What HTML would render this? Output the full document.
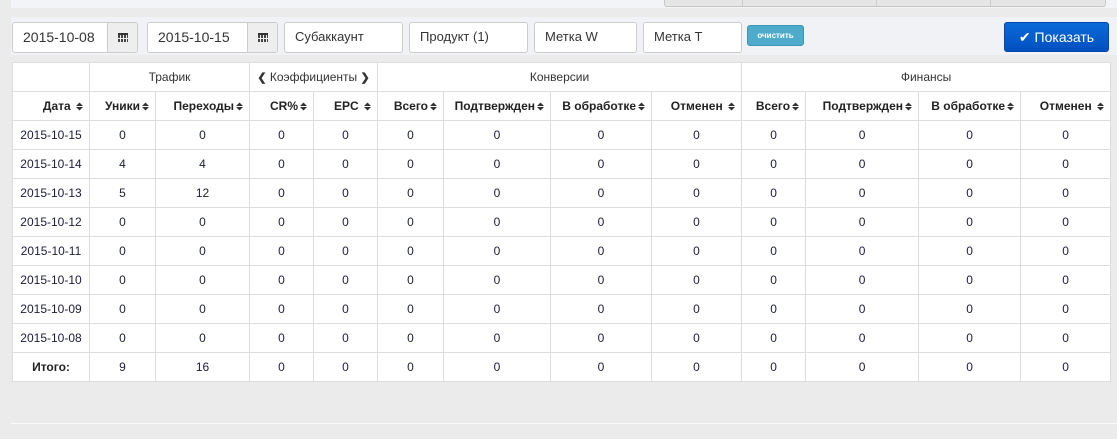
<!DOCTYPE html><html><head><meta charset="utf-8"><style>
body{margin:0;width:1117px;height:439px;background:#ebebeb;font-family:"Liberation Sans",Arial,sans-serif;position:relative;overflow:hidden;font-size:12px;color:#222}
.a{position:absolute;box-sizing:border-box}
.inp{background:#fff;border:1px solid #ccc;border-radius:3px;font-size:14px;color:#333;padding:6px 0 0 10px;height:31px}
.add{background:#eee;border-left:1px solid #ccc;position:absolute;top:0;right:0;width:29px;height:29px;border-radius:0 3px 3px 0}
.add i{position:absolute;left:10px;top:10px;width:10px;height:9px;background:repeating-linear-gradient(90deg,#444 0 2px,#eee 2px 3px),#444;border-top:2px solid #333;box-sizing:border-box}
.add i:after{content:"";position:absolute;left:0;right:0;top:3px;height:1px;background:#eee}
table{border-collapse:collapse;position:absolute;left:12px;top:62px;width:1098px;background:#fff;table-layout:fixed;border-radius:4px}
td,th{border:1px solid #ddd;height:28px;padding:0 6px;text-align:center;font-size:12px;color:#1c1c3a;white-space:nowrap;overflow:hidden}
th{font-weight:bold;color:#222;text-align:right}
tr.g th{font-weight:normal;text-align:center;color:#333}
.s{display:inline-block;width:7px;height:9px;margin-left:2px;vertical-align:-1px}
</style></head><body>
<svg width="0" height="0" style="position:absolute"><defs><symbol id="s" viewBox="0 0 7 9"><path d="M0 4L3.5 0.5L7 4ZM0 5L3.5 8.5L7 5Z" fill="#333"/></symbol></defs></svg>
<div class="a" style="left:11px;top:0;width:1106px;height:8px;background:#f3f4f7"></div>
<div class="a" style="left:664px;top:0;width:442px;height:7px;background:#e6e6e6;border:1px solid #c8c8c8;border-top:none;border-radius:0 0 3px 3px"></div>
<div class="a" style="left:742px;top:0;width:1px;height:6px;background:#ccc"></div>
<div class="a" style="left:876px;top:0;width:1px;height:6px;background:#ccc"></div>
<div class="a" style="left:990px;top:0;width:1px;height:6px;background:#ccc"></div>
<div class="a" style="left:11px;top:17px;width:1106px;height:38px;background:#f1f2f5"></div>
<div class="a inp" style="left:12px;top:22px;width:126px">2015-10-08<span class="add"><i></i></span></div>
<div class="a inp" style="left:147px;top:22px;width:131px">2015-10-15<span class="add"><i></i></span></div>
<div class="a inp" style="left:284px;top:22px;width:119px;font-size:13px">Субаккаунт</div>
<div class="a inp" style="left:409px;top:22px;width:119px;font-size:13px">Продукт (1)</div>
<div class="a inp" style="left:534px;top:22px;width:103px;font-size:13px">Метка W</div>
<div class="a inp" style="left:643px;top:22px;width:99px;font-size:13px">Метка T</div>
<div class="a" style="left:747px;top:25px;width:57px;height:21px;background:#4eabcb;border:1px solid #3a97b8;border-radius:3px;color:#fff;font-size:8px;font-weight:bold;text-align:center;line-height:19px">очистить</div>
<div class="a" style="left:1004px;top:22px;width:105px;height:30px;background:linear-gradient(#0a6ad8,#0350c0);border:1px solid #0447a8;border-radius:3px;color:#fff;font-size:14px;line-height:28px;text-align:center">✔ Показать</div>
<table>
<colgroup><col style="width:77px"><col style="width:66px"><col style="width:94px"><col style="width:64px"><col style="width:64px"><col style="width:66px"><col style="width:107px"><col style="width:101px"><col style="width:90px"><col style="width:64px"><col style="width:113px"><col style="width:102px"><col style="width:90px"></colgroup>
<tr class="g"><th></th><th colspan="2">Трафик</th><th colspan="2"><b style="font-size:11px">❮</b> Коэффициенты <b style="font-size:11px">❯</b></th><th colspan="4">Конверсии</th><th colspan="4">Финансы</th></tr>
<tr><th>Дата <svg class="s"><use href="#s"/></svg></th><th>Уники<svg class="s"><use href="#s"/></svg></th><th>Переходы<svg class="s"><use href="#s"/></svg></th><th>CR%<svg class="s"><use href="#s"/></svg></th><th>EPC <svg class="s"><use href="#s"/></svg></th><th>Всего<svg class="s"><use href="#s"/></svg></th><th>Подтвержден<svg class="s"><use href="#s"/></svg></th><th>В обработке<svg class="s"><use href="#s"/></svg></th><th>Отменен <svg class="s"><use href="#s"/></svg></th><th>Всего<svg class="s"><use href="#s"/></svg></th><th>Подтвержден<svg class="s"><use href="#s"/></svg></th><th>В обработке<svg class="s"><use href="#s"/></svg></th><th>Отменен <svg class="s"><use href="#s"/></svg></th></tr>
<tr><td>2015-10-15</td><td>0</td><td>0</td><td>0</td><td>0</td><td>0</td><td>0</td><td>0</td><td>0</td><td>0</td><td>0</td><td>0</td><td>0</td></tr>
<tr><td>2015-10-14</td><td>4</td><td>4</td><td>0</td><td>0</td><td>0</td><td>0</td><td>0</td><td>0</td><td>0</td><td>0</td><td>0</td><td>0</td></tr>
<tr><td>2015-10-13</td><td>5</td><td>12</td><td>0</td><td>0</td><td>0</td><td>0</td><td>0</td><td>0</td><td>0</td><td>0</td><td>0</td><td>0</td></tr>
<tr><td>2015-10-12</td><td>0</td><td>0</td><td>0</td><td>0</td><td>0</td><td>0</td><td>0</td><td>0</td><td>0</td><td>0</td><td>0</td><td>0</td></tr>
<tr><td>2015-10-11</td><td>0</td><td>0</td><td>0</td><td>0</td><td>0</td><td>0</td><td>0</td><td>0</td><td>0</td><td>0</td><td>0</td><td>0</td></tr>
<tr><td>2015-10-10</td><td>0</td><td>0</td><td>0</td><td>0</td><td>0</td><td>0</td><td>0</td><td>0</td><td>0</td><td>0</td><td>0</td><td>0</td></tr>
<tr><td>2015-10-09</td><td>0</td><td>0</td><td>0</td><td>0</td><td>0</td><td>0</td><td>0</td><td>0</td><td>0</td><td>0</td><td>0</td><td>0</td></tr>
<tr><td>2015-10-08</td><td>0</td><td>0</td><td>0</td><td>0</td><td>0</td><td>0</td><td>0</td><td>0</td><td>0</td><td>0</td><td>0</td><td>0</td></tr>
<tr><td style="font-weight:bold;color:#222">Итого:</td><td>9</td><td>16</td><td>0</td><td>0</td><td>0</td><td>0</td><td>0</td><td>0</td><td>0</td><td>0</td><td>0</td><td>0</td></tr>
</table>
<div class="a" style="left:11px;top:423px;width:1106px;height:1px;background:#fafafa"></div>
</body></html>
